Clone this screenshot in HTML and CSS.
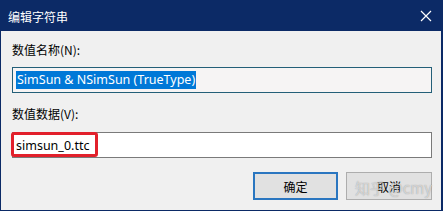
FILE: index.html
```html
<!DOCTYPE html>
<html lang="zh-CN">
<head>
    <meta charset="UTF-8">
    <title>编辑字符串</title>
    <link rel="stylesheet" href="styles.css">
</head>
<body>
    <div class="window">
        <div class="titlebar">
            <span class="title">编辑字符串</span>
            <svg class="close" width="12" height="12" viewBox="0 0 12 12">
                <path d="M1 1 L11 11 M11 1 L1 11" stroke="#fff" stroke-width="1.2" fill="none"/>
            </svg>
        </div>
        <div class="content">
            <div class="label">数值名称(N):</div>
            <div class="field field-name"><span class="selected">SimSun &amp; NSimSun (TrueType)</span></div>
            <div class="label label-data">数值数据(V):</div>
            <div class="field field-data">
                <span>simsun_0.ttc</span>
                <div class="mark"></div>
            </div>
            <div class="buttons">
                <div class="btn btn-default">确定</div>
                <div class="btn">取消</div>
            </div>
        </div>
        <div class="watermark">知乎 @cmy</div>
    </div>
</body>
</html>
```

FILE: styles.css
```css
body {
    margin: 0;
    background: #f0f0f0;
    font-family: "Noto Sans", "Noto Sans CJK SC", sans-serif;
    font-size: 12px;
    color: #000;
}

.window {
    position: relative;
    width: 443px;
    height: 211px;
    box-sizing: border-box;
    border: 1px solid #0b2a66;
    border-top: none;
    border-right-width: 2px;
    background: #f0f0f0;
}

.titlebar {
    height: 31px;
    background: #0c2a66;
    display: flex;
    align-items: center;
    justify-content: space-between;
    padding: 0 8px 0 8px;
    margin: 0 -2px 0 -1px;
}

.title {
    color: #fff;
    font-family: "Noto Sans CJK SC", sans-serif;
    font-size: 12px;
    padding-top: 1px;
}

.close {
    margin-right: 3px;
    margin-top: 1px;
}

.content {
    padding: 10px 9px 0 11px;
}

.label {
    height: 18px;
    line-height: 18px;
    font-family: "Noto Sans CJK SC", sans-serif;
}

.label-data {
    margin-top: 12px;
}

.field {
    position: relative;
    height: 26px;
    box-sizing: border-box;
    margin-top: 8px;
    display: flex;
    align-items: center;
    padding-left: 3px;
    font-size: 12.5px;
}

.field-name {
    border: 1px solid #235f78;
    background: #f6f4f4;
}

.selected {
    background: #0078d7;
    color: #fff;
    padding: 0 1px;
    line-height: 18px;
}

.field-data {
    border: 1px solid #7a7a7a;
    background: #fff;
    margin-top: 9px;
}

.mark {
    position: absolute;
    left: -2px;
    top: -1px;
    width: 87px;
    height: 25px;
    box-sizing: border-box;
    border: 3px solid #e2202b;
    border-radius: 3px;
}

.buttons {
    display: flex;
    justify-content: flex-end;
    gap: 8px;
    margin-top: 14px;
}

.btn {
    width: 86px;
    height: 28px;
    box-sizing: border-box;
    border: 1px solid #adadad;
    background: #e1e1e1;
    display: flex;
    align-items: center;
    justify-content: center;
    font-family: "Noto Sans CJK SC", sans-serif;
}

.btn-default {
    border: 2px solid #2a76c0;
    width: 85px;
}

.watermark {
    position: absolute;
    right: 9px;
    bottom: 12px;
    font-family: "Noto Sans CJK SC", sans-serif;
    font-size: 15px;
    color: rgba(255, 255, 255, 0.55);
    text-shadow: 0 0 1px rgba(90, 90, 90, 0.6);
}
```
